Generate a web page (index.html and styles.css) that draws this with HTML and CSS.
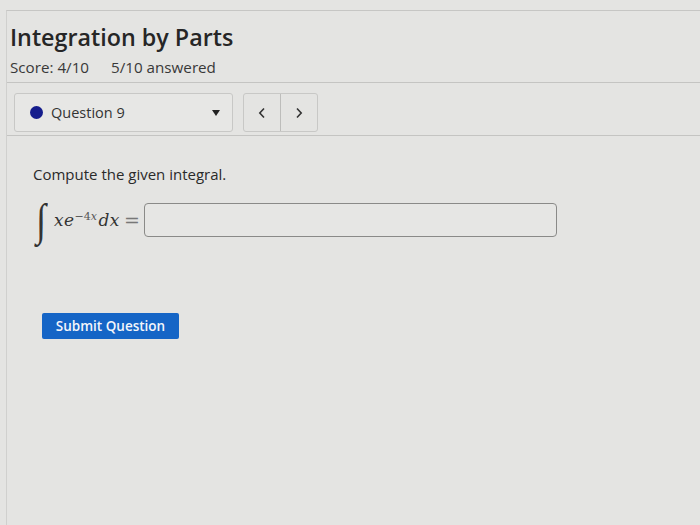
FILE: index.html
```html
<!DOCTYPE html>
<html>
<head>
    <title>Integration by Parts</title>
    <link rel="stylesheet" href="styles.css">
</head>
<body>
    <div class="page">
        <div class="header">
            <h1 class="title">Integration by Parts</h1>
            <div class="score">
                <span>Score: 4/10</span>
                <span>5/10 answered</span>
            </div>
        </div>

        <div class="nav">
            <div class="picker">
                <span class="dot"></span>
                <span class="picker-label">Question 9</span>
                <span class="caret"></span>
            </div>
            <div class="arrows">
                <a class="arrow">
                    <svg width="8" height="12" viewBox="0 0 8 12"><path d="M6 1.5 L1.8 6 L6 10.5" fill="none" stroke="#333" stroke-width="1.6"/></svg>
                </a>
                <a class="arrow">
                    <svg width="8" height="12" viewBox="0 0 8 12"><path d="M2 1.5 L6.2 6 L2 10.5" fill="none" stroke="#333" stroke-width="1.6"/></svg>
                </a>
            </div>
        </div>

        <div class="question">
            <p class="prompt">Compute the given integral.</p>
            <div class="equation">
                <span class="math">
                    <span class="int">&int;</span><i>xe</i><sup>&minus;4<i>x</i></sup><i>dx</i>
                    <span class="eq">=</span>
                </span>
                <input class="answer" type="text">
            </div>
            <button class="submit">Submit Question</button>
        </div>
    </div>
</body>
</html>
```

FILE: styles.css
```css
body, html {
    margin: 0;
    padding: 0;
    background-color: #e4e4e2;
    font-family: "Open Sans", Lato, sans-serif;
    color: #2b2b2b;
}

.page {
    height: 525px;
    border-top: 1px solid #c6c6c4;
    border-left: 1px solid #d0d0ce;
    margin-left: 6px;
    margin-top: 10px;
    box-sizing: border-box;
}

.header {
    padding: 11px 0 0 3px;
    border-bottom: 1px solid #c4c4c2;
    height: 72px;
    box-sizing: border-box;
}

.title {
    margin: 0;
    font-size: 23.3px;
    font-weight: 600;
    line-height: 30px;
    color: #262626;
}

.score {
    display: flex;
    gap: 22px;
    font-size: 15.2px;
    line-height: 20px;
    margin-top: 5px;
    color: #383838;
}

.nav {
    display: flex;
    align-items: flex-start;
    gap: 10px;
    height: 53px;
    padding: 10px 0 0 7px;
    border-bottom: 1px solid #c4c4c2;
    box-sizing: border-box;
}

.picker {
    width: 219px;
    height: 39px;
    box-sizing: border-box;
    border: 1px solid #c8c8c6;
    border-radius: 3px;
    display: flex;
    align-items: center;
    padding: 0 12px 0 15px;
    background-color: #e7e7e5;
}

.dot {
    width: 13px;
    height: 13px;
    border-radius: 50%;
    background-color: #151d8c;
    margin-right: 8px;
}

.picker-label {
    font-size: 14.5px;
    flex: 1;
    color: #333;
}

.caret {
    width: 0;
    height: 0;
    border-left: 4px solid transparent;
    border-right: 4px solid transparent;
    border-top: 6px solid #222;
}

.arrows {
    display: flex;
    height: 39px;
    border: 1px solid #c8c8c6;
    border-radius: 3px;
    box-sizing: border-box;
}

.arrow {
    width: 36px;
    display: flex;
    align-items: center;
    justify-content: center;
    cursor: pointer;
}

.arrow + .arrow {
    border-left: 1px solid #bdbdbb;
}

.question {
    padding-left: 26px;
}

.prompt {
    margin: 28px 0 0 0;
    font-size: 15px;
    line-height: 20px;
    color: #2a2a2a;
}

.equation {
    display: flex;
    align-items: center;
    margin-top: 14px;
    height: 44px;
}

.math {
    font-family: "DejaVu Serif", "Liberation Serif", serif;
    font-size: 17px;
    color: #333;
    display: flex;
    align-items: center;
    padding-left: 3px;
}

.math i {
    font-style: italic;
    letter-spacing: 0.5px;
}

.int {
    font-family: "Liberation Serif", serif;
    font-size: 36px;
    font-style: italic;
    margin-right: 8px;
    transform: scaleY(1.25);
    display: inline-block;
}

.math sup {
    font-size: 11px;
    margin-right: 1px;
    position: relative;
    top: -4px;
    color: #555;
}

.eq {
    margin: 0 3px 0 4px;
    color: #777;
    font-size: 19px;
}

.answer {
    width: 413px;
    height: 34px;
    box-sizing: border-box;
    border: 1px solid #8a8a88;
    border-radius: 4px;
    background-color: #e6e6e4;
    margin-left: 1px;
}

.submit {
    display: block;
    margin: 71px 0 0 9px;
    width: 137px;
    height: 26px;
    background-color: #1565c6;
    color: #f4f6fb;
    border: none;
    border-radius: 2px;
    font-family: "Open Sans", sans-serif;
    font-size: 13.5px;
    font-weight: 600;
    padding: 0;
}
```
